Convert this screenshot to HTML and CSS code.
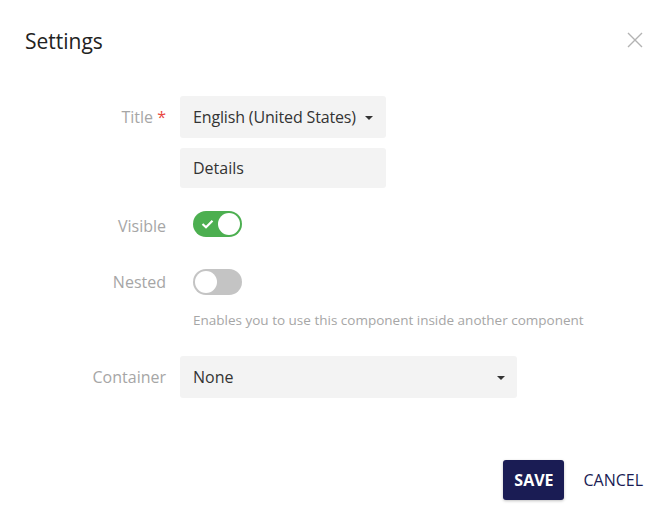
FILE: index.html
```html
<!DOCTYPE html>
<html>
<head>
<meta charset="utf-8">
<link rel="stylesheet" href="styles.css">
</head>
<body>
<div class="dialog">
  <div class="header">
    <h1 class="title">Settings</h1>
    <button class="close" aria-label="Close">
      <svg width="16" height="16" viewBox="0 0 16 16"><path d="M1 1 L15 15 M15 1 L1 15" stroke="#b3b3b3" stroke-width="1.4" fill="none"/></svg>
    </button>
  </div>
  <div class="form">
    <div class="label row-title">Title <span class="req">*</span></div>
    <div class="control">
      <div class="select lang"><span class="lang-text">English (United States)</span><span class="caret"></span></div>
      <div class="input">Details</div>
    </div>

    <div class="label row-toggle">Visible</div>
    <div class="control row-toggle">
      <span class="toggle on"><svg class="check" width="13" height="10" viewBox="0 0 13 10"><path d="M1.5 5 L5 8.3 L11.5 1.8" stroke="#fff" stroke-width="2.2" fill="none"/></svg><span class="knob"></span></span>
    </div>

    <div class="label row-toggle nested-label">Nested</div>
    <div class="control row-toggle nested-control">
      <span class="toggle off"><span class="knob"></span></span>
      <div class="help">Enables you to use this component inside another component</div>
    </div>

    <div class="label row-container">Container</div>
    <div class="control row-container">
      <div class="select wide">None<span class="caret"></span></div>
    </div>
  </div>
  <div class="footer">
    <button class="btn save">SAVE</button>
    <button class="btn cancel">CANCEL</button>
  </div>
</div>
</body>
</html>
```
FILE: styles.css
```css
* { box-sizing: border-box; }
html, body { margin: 0; padding: 0; background: #fff; }
body {
  font-family: "Open Sans", "Noto Sans", sans-serif;
  color: #333;
  width: 670px;
  height: 516px;
  overflow: hidden;
}
.dialog {
  padding: 26px 27px 0 25px;
}
.header {
  display: flex;
  justify-content: space-between;
  align-items: center;
  height: 30px;
}
.title {
  margin: 0;
  font-size: 21px;
  font-weight: 400;
  color: #222;
  line-height: 30px;
}
.close {
  border: 0;
  background: none;
  padding: 0;
  width: 16px;
  height: 16px;
  display: flex;
  margin-top: -2px;
}
.form {
  margin-top: 40px;
  display: grid;
  grid-template-columns: 141px 1fr;
  column-gap: 14px;
  align-items: start;
}
.label {
  text-align: right;
  font-size: 16px;
  color: #a6a6a6;
  line-height: 42px;
}
.req { color: #e8463f; }
.control {
  display: flex;
  flex-direction: column;
  align-items: flex-start;
  gap: 10px;
}
.select, .input {
  background: #f3f3f3;
  border-radius: 3px;
  font-size: 16px;
  color: #333;
  padding: 0 13px;
  display: flex;
  align-items: center;
  white-space: nowrap;
}
.select { height: 42px; }
.input { height: 40px; width: 206px; }
.lang { width: 206px; padding-right: 0; }
.lang-text { letter-spacing: -0.15px; }
.wide { width: 337px; justify-content: space-between; padding-right: 12px; }
.caret {
  display: inline-block;
  flex: none;
  width: 0; height: 0;
  border-left: 4px solid transparent;
  border-right: 4px solid transparent;
  border-top: 4px solid #333;
  margin-left: 9px;
  margin-top: 2px;
}
.row-toggle.label { line-height: 26px; margin-top: 25px; }
.row-toggle.control { margin-top: 23px; padding-left: 13px; }
.nested-control { margin-top: 30px !important; gap: 0; }
.nested-label { margin-top: 30px !important; }
.toggle {
  display: inline-flex;
  align-items: center;
  width: 49px;
  height: 26px;
  border-radius: 13px;
  padding: 2px;
  position: relative;
}
.toggle.on { background: #4caf50; justify-content: flex-end; }
.toggle.off { background: #c4c4c4; justify-content: flex-start; }
.knob {
  width: 22px;
  height: 22px;
  border-radius: 50%;
  background: #fff;
}
.check { position: absolute; left: 8px; top: 8px; }
.help {
  font-size: 13.5px;
  color: #a6a6a6;
  margin-top: 16px;
  line-height: 18px;
}
.row-container.label, .row-container.control { margin-top: 27px; }
.footer {
  display: flex;
  justify-content: flex-end;
  align-items: center;
  gap: 19px;
  margin-top: 62px;
  margin-right: 0;
}
.btn {
  font-family: "Open Sans", "Noto Sans", sans-serif;
  font-size: 16px;
  border: 0;
  cursor: pointer;
}
.save {
  background: #1a1c54;
  color: #fff;
  font-weight: 700;
  height: 40px;
  width: 61px;
  border-radius: 3px;
  padding: 0;
  box-shadow: 0 1px 3px rgba(0,0,0,0.25);
}
.cancel {
  background: none;
  color: #1a1c54;
  padding: 0;
  font-weight: 400;
}
```
